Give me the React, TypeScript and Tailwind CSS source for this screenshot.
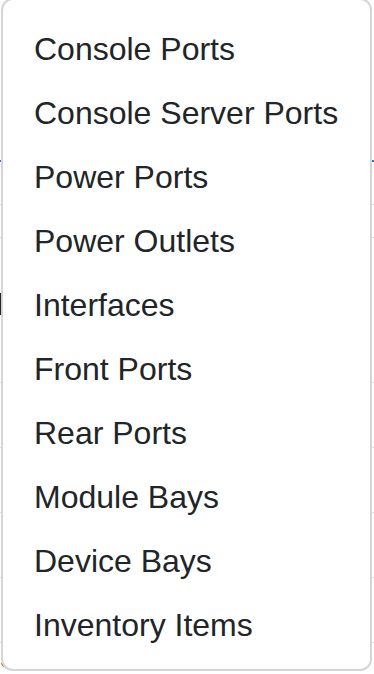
import React from "react";

const items = [
  "Console Ports",
  "Console Server Ports",
  "Power Ports",
  "Power Outlets",
  "Interfaces",
  "Front Ports",
  "Rear Ports",
  "Module Bays",
  "Device Bays",
  "Inventory Items",
];

export default function App() {
  return (
    <div
      className="relative h-[674px] w-[374px] overflow-hidden bg-white"
      style={{ fontFamily: '"Liberation Sans", Arial, sans-serif' }}
    >
      {/* page behind the menu */}
      <div className="flex flex-col">
        <div className="h-[160px]" />
        <div className="h-[2px] bg-[#3b6fd6]" />
        <div className="h-[43px] border-b border-[#dcdcdc]" />
        <div className="h-[33px] border-b border-[#dcdcdc]" />
        <div className="h-[55px]" />
        <div className="h-[22px] w-[2px] bg-[#222]" />
        <div className="h-[68px] border-b border-[#e2e2e2]" />
        <div className="h-[65px] border-b border-[#e2e2e2]" />
        <div className="h-[65px] border-b border-[#e2e2e2]" />
        <div className="h-[65px] border-b border-[#e2e2e2]" />
        <div className="h-[65px] border-b border-[#e2e2e2]" />
        <div className="pt-[2px] text-[28px] leading-none text-[#222]">Stub Unit</div>
      </div>

      {/* dropdown menu */}
      <div className="absolute left-[1px] top-[-2px] w-[371px] rounded-[12px] border-2 border-[#d5d5d5] bg-white pb-[12px] pt-[17px]">
        <ul className="flex flex-col">
          {items.map((t) => (
            <li
              key={t}
              className="px-[31px] py-[8px] text-[32px] leading-[48px] text-[#212529] whitespace-nowrap"
            >
              {t}
            </li>
          ))}
        </ul>
      </div>
    </div>
  );
}
